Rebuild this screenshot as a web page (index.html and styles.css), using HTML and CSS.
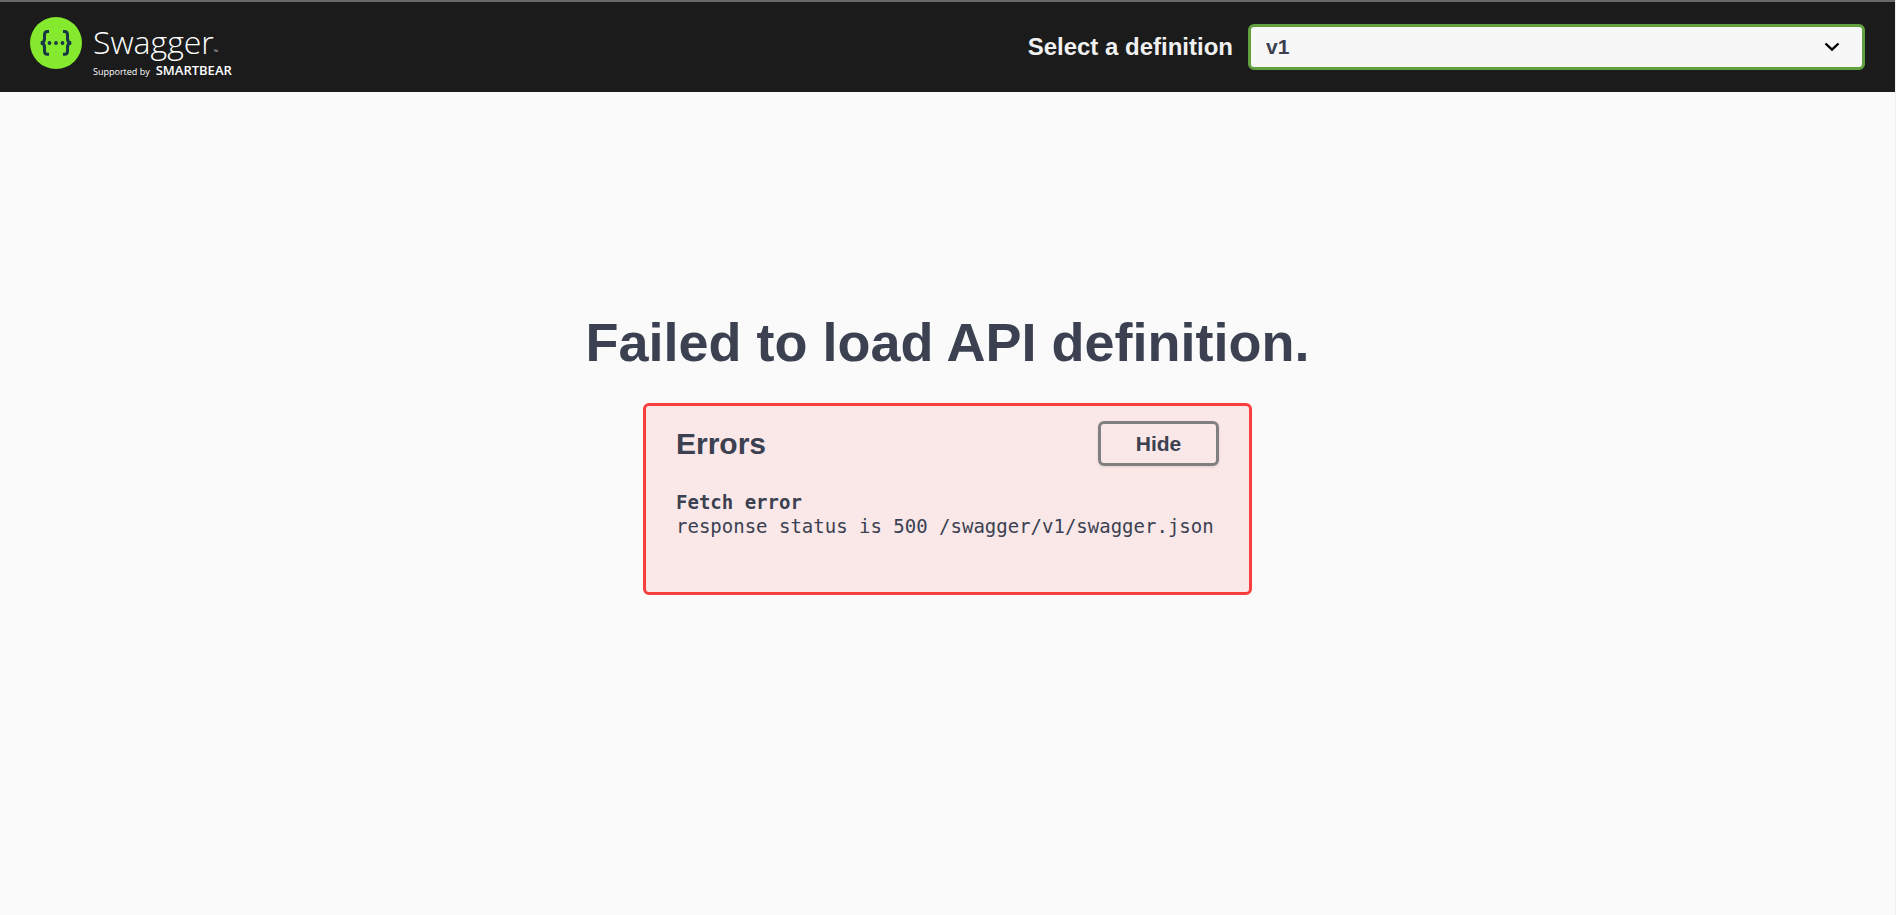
FILE: index.html
```html
<!DOCTYPE html>
<html lang="en">
<head>
<meta charset="utf-8">
<meta name="viewport" content="width=device-width, initial-scale=1">
<title>Swagger UI</title>
<link rel="stylesheet" href="styles.css">
</head>
<body>
<header class="topbar">
  <a class="logo" href="#" aria-label="Swagger, supported by SmartBear">
    <svg class="logo-mark" viewBox="0 0 52 52" aria-hidden="true">
      <circle cx="26" cy="26" r="26" fill="#85ea2d"/>
      <g fill="none" stroke="#173647" stroke-width="3">
        <path d="M19 14.500h-1.500c-2.300 0-3 1.200-3 3.400v3.900c0 2.600-1.200 4.100-3.800 4.200 2.600.1 3.800 1.600 3.800 4.200v3.700c0 2.200.7 3.400 3 3.400H19"/>
        <path d="M33 14.500h1.500c2.300 0 3 1.200 3 3.400v3.900c0 2.600 1.200 4.100 3.800 4.200-2.600.1-3.800 1.600-3.800 4.200v3.700c0 2.200-.7 3.400-3 3.400H33"/>
      </g>
      <g fill="#173647"><circle cx="19.500" cy="26" r="1.900"/><circle cx="26" cy="26" r="1.900"/><circle cx="32.500" cy="26" r="1.900"/></g>
    </svg>
    <span class="logo-text">
      <span class="logo-name">Swagger<span class="logo-tm">™</span></span>
      <span class="logo-by">Supported by <b class="logo-brand">SMARTBEAR</b></span>
    </span>
  </a>
  <form class="picker">
    <label class="picker-label" for="definition">Select a definition</label>
    <span class="picker-box">
      <select class="picker-select" id="definition"><option>v1</option></select>
      <svg class="picker-arrow" viewBox="0 0 16 10" aria-hidden="true"><path d="M1.500 1.500L8 7.700l6.500-6.200" fill="none" stroke="#000" stroke-width="2.400"/></svg>
    </span>
  </form>
</header>
<main class="content">
  <h1 class="title">Failed to load API definition.</h1>
  <section class="errors">
    <div class="errors-head">
      <h2 class="errors-title">Errors</h2>
      <button class="errors-toggle" type="button">Hide</button>
    </div>
    <div class="errors-body">
      <strong>Fetch error</strong>
      <span>response status is 500 /swagger/v1/swagger.json</span>
    </div>
  </section>
</main>
</body>
</html>
```
FILE: styles.css
```css
* { box-sizing: border-box; }

body {
  margin: 0;
  min-height: 100vh;
  border-right: 1px solid #f0f0f0;
  background: #fafafa;
  color: #3b4151;
  font-family: Arial, "Liberation Sans", sans-serif;
}

.topbar {
  display: flex;
  align-items: flex-start;
  justify-content: space-between;
  padding: 15px 30px 12px;
  border-top: 2px solid #696969;
  background: #1b1b1b;
}

.logo {
  display: flex;
  gap: 11px;
  color: #fff;
  font-family: "Open Sans", sans-serif;
  text-decoration: none;
}

.logo-mark { width: 52px; height: 52px; }

.logo-text { display: flex; flex-direction: column; padding-top: 5px; }

.logo-name { font-size: 32px; font-weight: 300; line-height: 40px; }

.logo-tm { font-size: 6px; line-height: 1; }

.logo-by { display: flex; align-items: baseline; gap: 6px; font-size: 9px; line-height: 16px; }

.logo-brand { font-size: 13px; font-weight: 600; }

.picker { display: flex; align-items: center; gap: 15px; padding-top: 7px; }

.picker-label { color: #f0f0f0; font-size: 24px; font-weight: 700; }

.picker-box { position: relative; width: 617px; }

.picker-select {
  display: block;
  width: 100%;
  height: 46px;
  padding: 0 60px 2px 15px;
  border: 3px solid #62a03f;
  border-radius: 6px;
  appearance: none;
  background: #f7f7f7;
  color: #3b4151;
  font-family: inherit;
  font-size: 21px;
  font-weight: 700;
}

.picker-arrow {
  position: absolute;
  top: 18px;
  right: 25px;
  width: 16px;
  height: 10px;
  pointer-events: none;
}

.content {
  display: flex;
  flex-direction: column;
  align-items: center;
  padding: 219px 30px 30px;
}

.title { margin: 0 0 30px; font-size: 54px; line-height: 62px; }

.errors {
  min-width: 609px;
  min-height: 192px;
  padding: 15px 30px;
  border: 3px solid #f93e3e;
  border-radius: 6px;
  background: #fae7e7;
}

.errors-head { display: flex; align-items: center; justify-content: space-between; }

.errors-title { margin: 0; font-size: 30px; line-height: 36px; }

.errors-toggle {
  min-width: 121px;
  height: 45px;
  padding: 0 34px;
  border: 3px solid #808080;
  border-radius: 6px;
  background: transparent;
  box-shadow: 0 1px 3px rgba(0, 0, 0, 0.1);
  color: #3b4151;
  font-family: inherit;
  font-size: 21px;
  font-weight: 700;
}

.errors-body {
  display: flex;
  flex-direction: column;
  padding-top: 24px;
  font-family: Consolas, "DejaVu Sans Mono", monospace;
  font-size: 19px;
  line-height: 24px;
}
```
